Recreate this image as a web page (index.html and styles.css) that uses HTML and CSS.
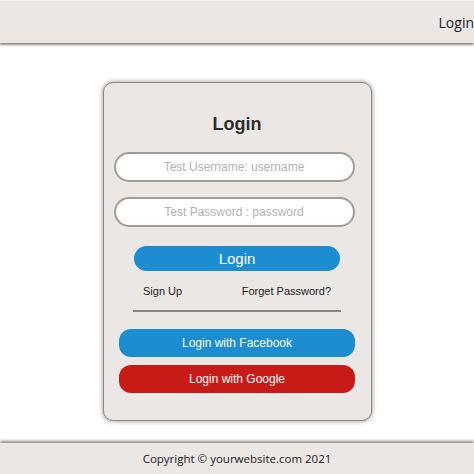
FILE: index.html
```
<!DOCTYPE html>
<html lang="en">
<head>
  <meta charset="UTF-8">
  <title>Login</title>
  <link rel="stylesheet" href="styles.css">
</head>
<body>
  <div class="topbar">
    <a class="nav-link" href="#">Login</a>
  </div>
  <div class="main">
    <form class="login-box">
      <h2 class="title">Login</h2>
      <input class="field" type="text" placeholder="Test Username: username">
      <input class="field" type="password" placeholder="Test Password : password">
      <button class="btn-login" type="button">Login</button>
      <div class="links">
        <a href="#">Sign Up</a>
        <a href="#">Forget Password?</a>
      </div>
      <div class="divider"></div>
      <button class="btn-social fb" type="button">Login with Facebook</button>
      <button class="btn-social google" type="button">Login with Google</button>
    </form>
  </div>
  <div class="footer">Copyright &copy; yourwebsite.com 2021</div>
</body>
</html>
```
FILE: styles.css
```
html, body{
    margin: 0;
    padding: 0;
}
body{
    background: #fff;
    min-height: 100vh;
    display: flex;
    flex-direction: column;
    font-family: "Liberation Sans", Arial, sans-serif;
}
.topbar{
    height: 42px;
    border-top: 1px solid #f6f4f3;
    background: #ebe7e5;
    box-shadow: 0 2px 2px #8f8c8a;
    display: flex;
    align-items: center;
    justify-content: flex-end;
}
.nav-link{
    font-family: "Open Sans", sans-serif;
    font-size: 14px;
    color: #1c1c1c;
    text-decoration: none;
    margin-right: 0;
}
.main{
    flex: 1;
    display: flex;
    justify-content: center;
    align-items: flex-start;
}
.login-box{
    box-sizing: border-box;
    width: 269px;
    height: 339px;
    margin-top: 39px;
    background: #ebe7e5;
    border: 1px solid #8c8987;
    border-radius: 10px;
    box-shadow: 0 0 5px rgba(0,0,0,0.45);
    display: flex;
    flex-direction: column;
    align-items: center;
}
.title{
    margin: 30px 0 0 0;
    font-size: 18px;
    line-height: 22px;
    font-weight: bold;
    color: #2e2e2e;
}
.field{
    box-sizing: border-box;
    width: 241px;
    height: 30px;
    margin: 17px 6px 0 0;
    border: 2px solid #a19d9b;
    border-radius: 15px;
    background: #fff;
    text-align: center;
    font-family: "Liberation Sans", Arial, sans-serif;
    font-size: 12px;
    outline: none;
}
.field + .field{
    margin-top: 15px;
}
.field::placeholder{
    color: #b3b3b3;
}
.btn-login{
    width: 206px;
    height: 25px;
    margin-top: 19px;
    border: none;
    border-radius: 13px;
    background: #1b8dd0;
    color: #fff;
    font-family: "Liberation Sans", Arial, sans-serif;
    font-size: 15px;
    padding: 0;
}
.links{
    width: 188px;
    margin-top: 13px;
    display: flex;
    justify-content: space-between;
    font-size: 11px;
    line-height: 14px;
}
.links a{
    color: #222;
    text-decoration: none;
}
.divider{
    width: 208px;
    height: 2px;
    margin-top: 12px;
    background: #8a8684;
}
.btn-social{
    width: 236px;
    height: 28px;
    margin-top: 17px;
    border: none;
    border-radius: 12px;
    color: #fff;
    font-family: "Liberation Sans", Arial, sans-serif;
    font-size: 12px;
    padding: 0;
}
.fb{
    background: #1b8dd0;
}
.google{
    margin-top: 8px;
    background: #c81b17;
}
.footer{
    height: 31px;
    margin-top: auto;
    background: #ebe7e5;
    box-shadow: 0 -2px 3px #8f8c8a;
    display: flex;
    align-items: center;
    justify-content: center;
    font-family: "Open Sans", sans-serif;
    font-size: 11.5px;
    color: #1c1c1c;
}
```
